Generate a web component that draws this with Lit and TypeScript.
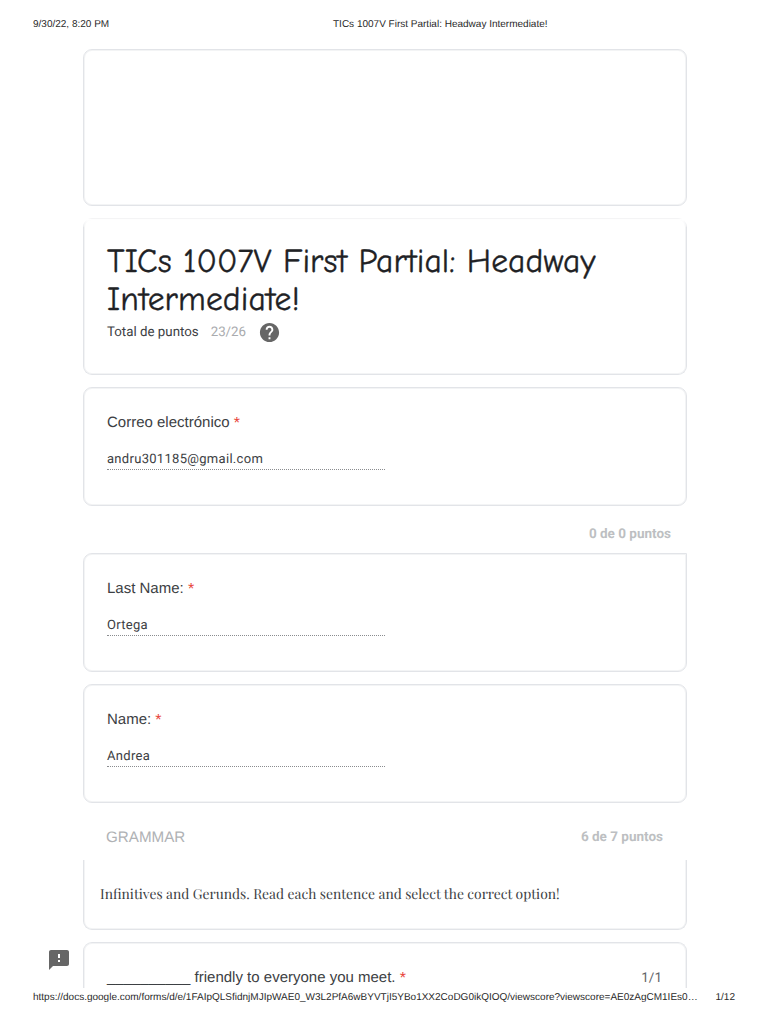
import { LitElement, html, css } from "lit";
import { customElement } from "lit/decorators.js";

@customElement("app-root")
export class AppRoot extends LitElement {
  static styles = css`
    :host {
      display: block;
      width: 768px;
      height: 1024px;
      background: #fff;
      overflow: hidden;
      position: relative;
      font-family: Roboto, "Liberation Sans", sans-serif;
      color: #202124;
      text-rendering: geometricPrecision;
    }
    .header {
      display: flex;
      height: 49px;
      padding: 19px 33px 0;
      box-sizing: border-box;
      font: 10px/12px "Liberation Sans", Arial, sans-serif;
      color: #2a2a2a;
    }
    .date { width: 300px; }
    .main {
      padding-left: 83px;
      width: 604px;
      display: flex;
      flex-direction: column;
    }
    .card {
      box-sizing: border-box;
      width: 604px;
      background: #fff;
      border: 1px solid #e2e4e8;
      border-radius: 9px;
      box-shadow: inset 0 0 0 1px #f3f4f5;
    }
    .banner { height: 157px; }
    .title-card {
      position: relative;
      margin-top: 12px;
      height: 157px;
      padding: 24px 23px 0;
      border-top-color: #f4f4f5;
    }
    .title-card::before {
      content: "";
      position: absolute;
      left: -1px;
      right: -1px;
      top: 0;
      height: 8px;
      background: linear-gradient(#fff, rgba(255, 255, 255, 0.2));
    }
    h1 {
      margin: 0;
      font: 400 33.6px/38px "Comic Sans MS", "Comic Neue", "DejaVu Sans", sans-serif;
      color: #202124;
      letter-spacing: 0.1px;
      -webkit-text-stroke: 0.35px #202124;
    }
    .total { display: flex; align-items: center; font-size: 13.3px; height: 20px; margin-top: 3px; color: #3c4043; }
    .score { color: #a9abae; margin-left: 12px; }
    .help { margin-left: 11.5px; width: 23px; height: 23px; display: block; flex: none; }
    .field {
      margin-top: 12px;
      height: 119px;
      padding: 24px 23px 0;
    }
    .label { font: 15px/22px "Liberation Sans", Arial, sans-serif; color: #3c4043; }
    .star { color: #e8453c; font-size: 16px; line-height: 0; vertical-align: -1px; }
    .value {
      width: 278px;
      margin-top: 16px;
      font-size: 13px;
      line-height: 20px;
      letter-spacing: 0.3px;
      color: #3c4043;
      height: 20px;
      border-bottom: 1px dotted #8a8c8f;
      box-sizing: content-box;
      height: 19px;
    }
    .points {
      font-size: 13.5px;
      font-weight: 700;
      color: #bdbfc2;
      text-align: right;
      line-height: 20px;
    }
    .p0 { height: 47px; padding: 18px 16px 0 0; box-sizing: border-box; }
    .flush { margin-top: 0; border-top-right-radius: 0; }
    .section {
      height: 57px;
      box-sizing: border-box;
      padding: 24px 24px 0 23px;
      display: flex;
      justify-content: space-between;
      align-items: flex-start;
    }
    .section-name { font: 15.2px/22px "Liberation Sans", Arial, sans-serif; color: #b0b2b5; }
    .desc {
      height: 70px;
      border-top: none;
      border-radius: 0 0 9px 9px;
      box-shadow: inset 1px 0 0 #f3f4f5, inset -1px 0 0 #f3f4f5, inset 0 -1px 0 #f3f4f5;
      padding: 22px 16px 0;
      font: 13.85px/24px "Playfair Display", "DejaVu Serif", "Liberation Serif", serif;
      color: #3c4043;
    }
    .q {
      margin-top: 12px;
      height: 60px;
      padding: 24px 24px 0 23px;
      display: flex;
      justify-content: space-between;
      font: 15px/22px "Liberation Sans", Arial, sans-serif;
      color: #3c4043;
      border-bottom: none;
      border-radius: 9px 9px 0 0;
    }
    .fs { color: #5f6368; font: 13.5px/22px Roboto, sans-serif; }
    .feedback {
      position: absolute;
      left: 47px;
      top: 948px;
      width: 24px;
      height: 24px;
    }
    .footer {
      position: absolute;
      left: 0;
      right: 0;
      top: 988px;
      height: 20px;
      background: #fff;
      padding: 4px 33px 0;
      box-sizing: border-box;
      display: flex;
      justify-content: space-between;
      font: 10px/12px "Liberation Sans", Arial, sans-serif;
      color: #2a2a2a;
    }
    .url { white-space: nowrap; }
  `;

  render() {
    return html`
      <div class="header">
        <span class="date">9/30/22, 8:20 PM</span>
        <span>TICs 1007V First Partial: Headway Intermediate!</span>
      </div>
      <div class="main">
        <div class="card banner"></div>
        <div class="card title-card">
          <h1>TICs 1007V First Partial: Headway Intermediate!</h1>
          <div class="total">
            <span>Total de puntos</span>
            <span class="score">23/26</span>
            <svg class="help" viewBox="0 0 24 24" aria-hidden="true">
              <path fill="#666" d="M12 2C6.48 2 2 6.48 2 12s4.48 10 10 10 10-4.48 10-10S17.52 2 12 2zm1 17h-2v-2h2v2zm2.07-7.75l-.9.92C13.45 12.9 13 13.5 13 15h-2v-.5c0-1.1.45-2.1 1.17-2.83l1.24-1.26c.37-.36.59-.86.59-1.41 0-1.1-.9-2-2-2s-2 .9-2 2H8c0-2.21 1.79-4 4-4s4 1.79 4 4c0 .88-.36 1.68-.93 2.25z"/>
            </svg>
          </div>
        </div>
        <div class="card field">
          <div class="label">Correo electrónico <span class="star">*</span></div>
          <div class="value">andru301185@gmail.com</div>
        </div>
        <div class="points p0">0 de 0 puntos</div>
        <div class="card field flush">
          <div class="label">Last Name: <span class="star">*</span></div>
          <div class="value">Ortega</div>
        </div>
        <div class="card field">
          <div class="label">Name: <span class="star">*</span></div>
          <div class="value">Andrea</div>
        </div>
        <div class="section">
          <span class="section-name">GRAMMAR</span>
          <span class="points">6 de 7 puntos</span>
        </div>
        <div class="card desc">Infinitives and Gerunds. Read each sentence and select the correct option!</div>
        <div class="card q">
          <span>__________ friendly to everyone you meet. <span class="star">*</span></span>
          <span class="fs">1/1</span>
        </div>
      </div>
      <svg class="feedback" viewBox="0 0 24 24" aria-hidden="true">
        <path fill="#666" d="M20 2H4c-1.1 0-2 .9-2 2v18l4-4h14c1.1 0 2-.9 2-2V4c0-1.1-.9-2-2-2zm-7 12h-2v-2h2v2zm0-4h-2V6h2v4z"/>
      </svg>
      <div class="footer">
        <span class="url">https://docs.google.com/forms/d/e/1FAIpQLSfidnjMJIpWAE0_W3L2PfA6wBYVTjI5YBo1XX2CoDG0ikQIOQ/viewscore?viewscore=AE0zAgCM1IEs0…</span>
        <span>1/12</span>
      </div>
    `;
  }
}
